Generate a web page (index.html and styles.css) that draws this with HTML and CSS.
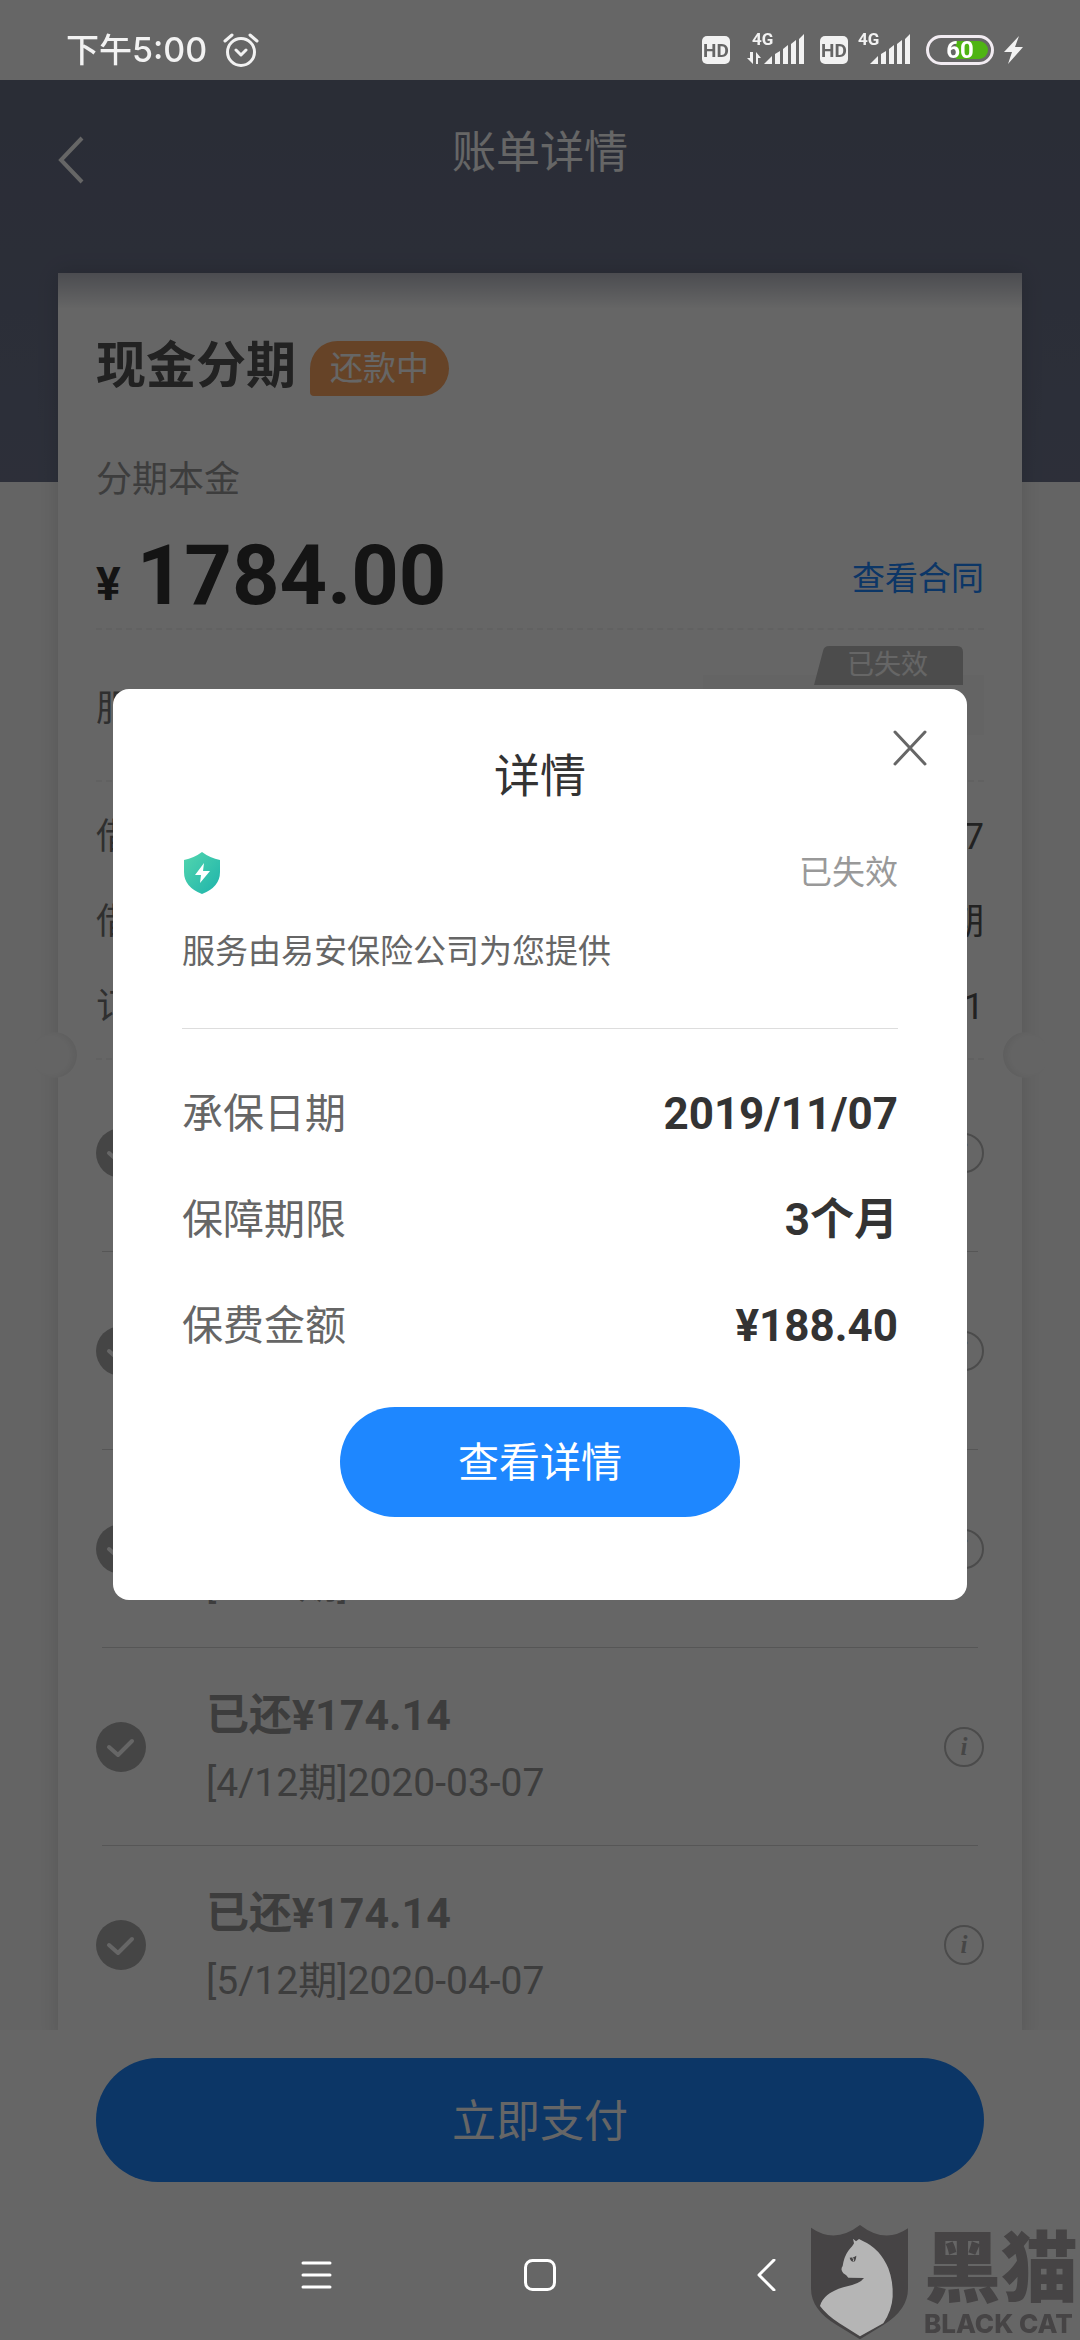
FILE: index.html
```html
<!DOCTYPE html>
<html lang="zh-CN">
<head>
    <meta charset="UTF-8">
    <meta name="viewport" content="width=device-width, initial-scale=1.0">
    <title>账单详情</title>
    <link rel="stylesheet" href="styles.css">
</head>
<body>
    <div class="page">
        <div class="status-bar">
            <div class="status-left">
                <span class="clock"><span class="clock-period">下午</span>5:00</span>
                <svg class="alarm" width="36" height="36" viewBox="0 0 36 36" fill="none" stroke="#f2f2f2" stroke-width="3" stroke-linecap="round" stroke-linejoin="round">
                    <circle cx="18" cy="20" r="13.5"/>
                    <path d="M2 9L9 3M27 3l7 6M13 18l5 5 5-5"/>
                </svg>
            </div>
            <div class="status-right">
                <span class="hd">HD</span>
                <svg class="signal" width="60" height="46" viewBox="0 -6 60 46" fill="#f2f2f2">
                    <text x="6" y="12" class="net">4G</text>
                    <path d="M4 19h3v12L1 25h3zM10 31V19l5 6h-3v6z"/>
                    <path d="M18 31l8-8v8zM29 31V21l5-3v13zM37 31V16l5-4v19zM45 31V11l5-4v24zM53 31V6l5-5v30z"/>
                </svg>
                <span class="hd">HD</span>
                <svg class="signal signal-second" width="54" height="46" viewBox="0 -6 54 46" fill="#f2f2f2">
                    <text x="0" y="12" class="net">4G</text>
                    <path d="M12 31l8-8v8zM23 31V21l5-3v13zM31 31V16l5-4v19zM39 31V11l5-4v24zM47 31V6l5-5v30z"/>
                </svg>
                <svg class="battery" width="68" height="30" viewBox="0 0 68 30">
                    <rect x="1.5" y="1.5" width="65" height="27" rx="13.5" fill="none" stroke="#f2ecf2" stroke-width="3"/>
                    <path d="M30 6h23a9 9 0 0 1 0 18H30z" fill="#4fb413"/>
                    <text x="34" y="23" text-anchor="middle" class="level">60</text>
                </svg>
                <svg width="20" height="30" viewBox="0 0 20 30" fill="#f2f2f2">
                    <path d="M15 1L0 17h8L4 29 19 12h-8z"/>
                </svg>
            </div>
        </div>

        <div class="main">
            <div class="header">
                <button type="button" class="back" aria-label="返回">
                    <svg width="26" height="48" viewBox="0 0 26 48" fill="none" stroke="#fff" stroke-width="4">
                        <path d="M24 2L3 24l21 22"/>
                    </svg>
                </button>
                <h1>账单详情</h1>
            </div>

            <div class="card">
                <div class="card-head">
                    <h2>现金分期</h2>
                    <span class="badge">还款中</span>
                </div>
                <p class="caption">分期本金</p>
                <div class="amount">
                    <span class="currency">¥</span>
                    <span class="number">1784.00</span>
                    <a href="#" class="contract">查看合同</a>
                </div>
                <div class="service">
                    <span>服务费</span>
                    <div class="service-box">
                        <span class="service-tag">
                            <svg width="149" height="39" viewBox="0 0 149 39" fill="#bfbfbf">
                                <path d="M0 39L9 5q1-5 6-5h128q6 0 6 6v33z"/>
                            </svg>
                            <span>已失效</span>
                        </span>
                    </div>
                </div>
                <dl class="info">
                    <div><dt>借款日期</dt><dd>2019-11-07</dd></div>
                    <div><dt>借款期限</dt><dd>12期</dd></div>
                    <div><dt>订单编号</dt><dd>201911071</dd></div>
                </dl>

                <ul class="plans">
                    <li>
                        <svg class="check" width="50" height="50" viewBox="0 0 50 50"><circle cx="25" cy="25" r="25" fill="#adadad"/><path d="M13 25l9 8 14-14" fill="none" stroke="#fff" stroke-width="4" stroke-linecap="round" stroke-linejoin="round"/></svg>
                        <div class="plan">
                            <strong>已还¥174.14</strong>
                            <span>[1/12期]2019-12-07</span>
                        </div>
                        <button type="button" class="tip" aria-label="说明">i</button>
                    </li>
                    <li>
                        <svg class="check" width="50" height="50" viewBox="0 0 50 50"><circle cx="25" cy="25" r="25" fill="#adadad"/><path d="M13 25l9 8 14-14" fill="none" stroke="#fff" stroke-width="4" stroke-linecap="round" stroke-linejoin="round"/></svg>
                        <div class="plan">
                            <strong>已还¥174.14</strong>
                            <span>[2/12期]2020-01-07</span>
                        </div>
                        <button type="button" class="tip" aria-label="说明">i</button>
                    </li>
                    <li>
                        <svg class="check" width="50" height="50" viewBox="0 0 50 50"><circle cx="25" cy="25" r="25" fill="#adadad"/><path d="M13 25l9 8 14-14" fill="none" stroke="#fff" stroke-width="4" stroke-linecap="round" stroke-linejoin="round"/></svg>
                        <div class="plan">
                            <strong>已还¥174.14</strong>
                            <span>[3/12期]2020-02-07</span>
                        </div>
                        <button type="button" class="tip" aria-label="说明">i</button>
                    </li>
                    <li>
                        <svg class="check" width="50" height="50" viewBox="0 0 50 50"><circle cx="25" cy="25" r="25" fill="#adadad"/><path d="M13 25l9 8 14-14" fill="none" stroke="#fff" stroke-width="4" stroke-linecap="round" stroke-linejoin="round"/></svg>
                        <div class="plan">
                            <strong>已还¥174.14</strong>
                            <span>[4/12期]2020-03-07</span>
                        </div>
                        <button type="button" class="tip" aria-label="说明">i</button>
                    </li>
                    <li>
                        <svg class="check" width="50" height="50" viewBox="0 0 50 50"><circle cx="25" cy="25" r="25" fill="#adadad"/><path d="M13 25l9 8 14-14" fill="none" stroke="#fff" stroke-width="4" stroke-linecap="round" stroke-linejoin="round"/></svg>
                        <div class="plan">
                            <strong>已还¥174.14</strong>
                            <span>[5/12期]2020-04-07</span>
                        </div>
                        <button type="button" class="tip" aria-label="说明">i</button>
                    </li>
                </ul>
            </div>
        </div>

        <div class="footer">
            <button type="button" class="pay">立即支付</button>
        </div>

        <div class="nav-bar">
            <button type="button" aria-label="菜单">
                <svg width="32" height="32" viewBox="0 0 32 32" fill="none" stroke="#fff" stroke-width="3" stroke-linecap="round"><path d="M3 4h27M3 16h27M3 28h27"/></svg>
            </button>
            <button type="button" aria-label="主页">
                <svg width="32" height="32" viewBox="0 0 32 32" fill="none" stroke="#fff" stroke-width="3"><rect x="1.5" y="1.5" width="29" height="29" rx="7"/></svg>
            </button>
            <button type="button" aria-label="返回">
                <svg width="32" height="32" viewBox="0 0 32 32" fill="none" stroke="#fff" stroke-width="3" stroke-linecap="round" stroke-linejoin="round"><path d="M26 1L11 16l15 15"/></svg>
            </button>
        </div>
    </div>

    <div class="mask">
        <div class="modal" role="dialog" aria-labelledby="modal-title">
            <button type="button" class="close" aria-label="关闭">
                <svg width="34" height="36" viewBox="0 0 34 36" stroke="#666" stroke-width="3" stroke-linecap="round"><path d="M2 2l30 32M32 2L2 34"/></svg>
            </button>
            <h2 id="modal-title">详情</h2>
            <div class="modal-status">
                <svg width="40" height="42" viewBox="0 0 40 42">
                    <defs>
                        <linearGradient id="shield" x1="0" y1="0" x2="1" y2="1">
                            <stop offset="0" stop-color="#53d6ae"/>
                            <stop offset="1" stop-color="#1db3ab"/>
                        </linearGradient>
                    </defs>
                    <path d="M20 0q8 6 18 8v12q0 15-18 22Q2 35 2 20V8q10-2 18-8z" fill="url(#shield)"/>
                    <path d="M22 11l-9 12h6l-1 8 10-12h-7z" fill="#fff"/>
                </svg>
                <span>已失效</span>
            </div>
            <p class="provider">服务由易安保险公司为您提供</p>
            <dl class="detail">
                <div><dt>承保日期</dt><dd>2019/11/07</dd></div>
                <div><dt>保障期限</dt><dd>3个月</dd></div>
                <div><dt>保费金额</dt><dd>¥188.40</dd></div>
            </dl>
            <button type="button" class="view">查看详情</button>
        </div>
    </div>

    <div class="brand">
        <svg width="97" height="115" viewBox="93 195 291 345">
            <path d="M93 203q72 50 147-8 75 58 144 10v180q0 65-74 110l-70 43-70-43q-77-45-77-110z" fill="#464445"/>
            <path d="M219 236l9 8 9-7 10 5q53 23 78 83 15 40 13 85-2 40-28 80l-70 39-62-39q-38-25-58-52 10-38 70-56 50-10 62-28l-47-1q-5-8-15-13-10-12-2-22 4-28 17-46 13-14 17-22z" fill="#b5b5b5"/>
            <path d="M209 293q14 0 20-6-1 18-9 18-8 0-11-12z" fill="#464445"/>
            <path d="M217 292q6 6 3 12" fill="none" stroke="#b5b5b5" stroke-width="3"/>
        </svg>
        <div class="brand-name">
            <span class="brand-cn">黑猫</span>
            <span class="brand-en">BLACK CAT</span>
        </div>
    </div>
</body>
</html>
```
FILE: styles.css
```css
* {
    box-sizing: border-box;
    margin: 0;
    padding: 0;
}

body {
    font-family: Roboto, 'Noto Sans CJK SC', sans-serif;
    background: #fff;
    color: #333;
}

button {
    font-family: inherit;
    border: none;
    background: none;
    cursor: pointer;
}

svg {
    display: block;
    flex: none;
}

.page {
    display: flex;
    flex-direction: column;
    height: 100vh;
}

/* status bar, stays above the mask */
.status-bar {
    position: relative;
    z-index: 20;
    flex: none;
    display: flex;
    justify-content: space-between;
    align-items: center;
    height: 80px;
    padding: 20px 56px 0 66px;
    color: #f2f2f2;
}

.status-left,
.status-right {
    display: flex;
    align-items: center;
}

.clock {
    font-family: Inter, 'Noto Sans CJK SC', sans-serif;
    font-size: 34px;
    line-height: 44px;
    font-weight: 500;
}

.clock-period {
    font-size: 33px;
}

.alarm {
    margin-left: 16px;
}

.hd {
    width: 28px;
    height: 28px;
    border-radius: 5px;
    background: #f2f2f2;
    color: #666;
    font-size: 19px;
    line-height: 29px;
    font-weight: 700;
    text-align: center;
}

.signal {
    margin: 0 14px 0 16px;
}

.signal-second {
    margin-left: 10px;
}

.net {
    font-size: 17px;
    font-weight: 700;
}

.battery {
    margin-right: 10px;
}

.level {
    font-size: 24px;
    font-weight: 700;
    fill: #fff;
}

/* bill */
.main {
    flex: 1;
    min-height: 0;
    overflow: hidden;
    background: linear-gradient(#697087, #707790) no-repeat 0 0 / 100% 402px #fafafa;
}

.header {
    position: relative;
    height: 193px;
    padding-top: 45px;
    color: #fff;
    text-align: center;
}

.header h1 {
    font-size: 44px;
    line-height: 56px;
    font-weight: 400;
}

.back {
    position: absolute;
    left: 58px;
    top: 56px;
}

.card {
    position: relative;
    margin: 0 58px;
    padding: 66px 38px 0;
    background: linear-gradient(#bcbec8, #fff) no-repeat 0 0 / 100% 36px #fff;
    box-shadow: 0 0 20px rgba(0, 0, 0, 0.14);
}

.card-head {
    display: flex;
    align-items: flex-start;
    gap: 14px;
}

.card-head h2 {
    color: #555;
    font-size: 50px;
    line-height: 54px;
    font-weight: 700;
}

.badge {
    height: 55px;
    margin-top: 2px;
    padding: 0 20px;
    border-radius: 28px 28px 28px 4px;
    background: #ffa762;
    color: #fff;
    font-size: 33px;
    line-height: 55px;
}

.caption {
    margin-top: 64px;
    color: #999;
    font-size: 36px;
    line-height: 40px;
}

.amount {
    display: flex;
    align-items: flex-end;
    margin-top: 28px;
    padding-bottom: 4px;
    border-bottom: 2px dashed #f3f3f3;
    font-weight: 700;
}

.currency {
    margin-right: 16px;
    font-size: 46px;
    line-height: 80px;
}

.number {
    font-size: 83px;
    line-height: 96px;
}

.contract {
    margin-left: auto;
    color: #1e87ff;
    font-size: 33px;
    line-height: 90px;
    font-weight: 400;
    text-decoration: none;
}

.service {
    display: flex;
    justify-content: space-between;
    align-items: center;
    height: 152px;
    border-bottom: 2px dashed #f3f3f3;
    color: #777;
    font-size: 36px;
}

.service-box {
    position: relative;
    width: 281px;
    height: 60px;
    background: #fafafa;
}

.service-tag {
    position: absolute;
    right: 21px;
    top: -29px;
}

.service-tag span {
    position: absolute;
    left: 33px;
    top: 0;
    color: #fff;
    font-size: 27px;
    line-height: 39px;
    white-space: nowrap;
}

.info {
    position: relative;
    display: flex;
    flex-direction: column;
    gap: 41px;
    padding: 33px 0 29px;
    border-bottom: 2px dashed #f3f3f3;
    font-size: 36px;
    line-height: 44px;
}

.info div {
    display: flex;
    justify-content: space-between;
}

.info dt {
    color: #777;
}

.info dd {
    color: #555;
}

.info::before,
.info::after {
    content: "";
    position: absolute;
    bottom: -20px;
    width: 46px;
    height: 46px;
    border-radius: 50%;
    background: #fafafa;
}

.info::before {
    left: -65px;
    box-shadow: inset -4px 0 6px rgba(0, 0, 0, 0.06);
}

.info::after {
    right: -65px;
    box-shadow: inset 4px 0 6px rgba(0, 0, 0, 0.06);
}

.plans {
    margin-top: -6px;
    list-style: none;
}

.plans li {
    display: flex;
    align-items: center;
    height: 198px;
    background: linear-gradient(#d8d8d8, #d8d8d8) no-repeat 50% 100% / calc(100% - 12px) 1px;
}

.plan {
    flex: 1;
    margin-left: 60px;
    padding-top: 4px;
    color: #999;
}

.plan strong,
.plan span {
    display: block;
    line-height: 68px;
}

.plan strong {
    font-size: 43px;
    font-weight: 700;
}

.plan span {
    font-size: 39px;
}

.tip {
    width: 40px;
    height: 40px;
    border: 2px solid #bbb;
    border-radius: 50%;
    color: #b0b0b0;
    font: italic 700 25px/34px 'Liberation Serif', serif;
}

.footer {
    flex: none;
    padding: 28px 96px;
    background: #fff;
}

.pay {
    width: 100%;
    height: 124px;
    padding-bottom: 5px;
    border-radius: 62px;
    background: #1e87ff;
    color: #fff;
    font-size: 44px;
}

/* system navigation, stays above the mask */
.nav-bar {
    position: relative;
    z-index: 20;
    flex: none;
    display: flex;
    justify-content: center;
    gap: 192px;
    height: 130px;
    align-items: center;
}

/* dialog */
.mask {
    position: fixed;
    inset: 0;
    z-index: 10;
    display: flex;
    align-items: center;
    padding: 80px 113px 132px;
    background: rgba(0, 0, 0, 0.6);
}

.modal {
    position: relative;
    flex: 1;
    padding: 57px 69px 83px;
    border-radius: 16px;
    background: #fff;
}

.modal h2 {
    font-size: 46px;
    line-height: 60px;
    font-weight: 400;
    text-align: center;
}

.close {
    position: absolute;
    right: 40px;
    top: 41px;
}

.modal-status {
    display: flex;
    justify-content: space-between;
    align-items: center;
    margin-top: 46px;
    color: #999;
    font-size: 33px;
    line-height: 42px;
}

.provider {
    margin-top: 37px;
    padding-bottom: 55px;
    border-bottom: 1px solid #ddd;
    color: #666;
    font-size: 33px;
    line-height: 42px;
}

.detail {
    display: flex;
    flex-direction: column;
    gap: 46px;
    margin-top: 55px;
    line-height: 60px;
}

.detail div {
    display: flex;
    justify-content: space-between;
}

.detail dt {
    color: #666;
    font-size: 41px;
}

.detail dd {
    font-size: 44px;
    font-weight: 700;
}

.view {
    display: block;
    width: 400px;
    height: 110px;
    margin: 51px auto 0;
    padding-bottom: 5px;
    border-radius: 55px;
    background: #1e87ff;
    color: #fff;
    font-size: 41px;
}

/* watermark */
.brand {
    position: fixed;
    right: 0;
    bottom: 0;
    z-index: 30;
    display: flex;
    gap: 16px;
    width: 269px;
    color: #464445;
}

.brand-name {
    display: flex;
    flex-direction: column;
    justify-content: flex-end;
}

.brand-cn {
    font-size: 77px;
    line-height: 76px;
    font-weight: 900;
}

.brand-en {
    font-family: Inter, sans-serif;
    font-size: 26px;
    line-height: 32px;
    font-weight: 800;
    white-space: nowrap;
}
```
